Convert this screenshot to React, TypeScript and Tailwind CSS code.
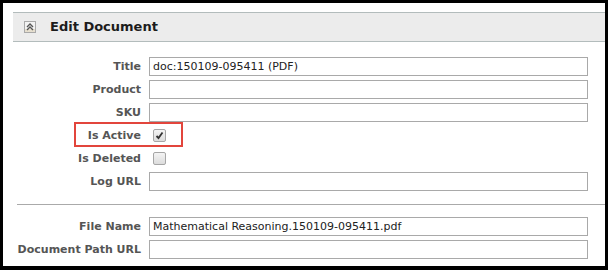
import React from "react";

const font = "font-['DejaVu_Sans','Verdana','Liberation_Sans',sans-serif]";

const CollapseIcon = () => (
     <svg width="12" height="12" viewBox="0 0 12 12" className="shrink-0">
          <rect x="0.5" y="0.5" width="11" height="11" fill="#f2f2f2" stroke="#a9a9a9" />
          <rect x="1" y="8" width="10" height="3" fill="#e6dfcf" />
          <path d="M3 6 L6 3 L9 6" fill="none" stroke="#555" strokeWidth="1.4" />
          <path d="M3 9 L6 6 L9 9" fill="none" stroke="#555" strokeWidth="1.4" />
     </svg>
);

const Checkbox = ({ checked }: { checked?: boolean }) => (
     <span className="flex h-[13px] w-[13px] items-center justify-center rounded-[2px] border border-[#a6a6a6] bg-gradient-to-b from-[#f4f4f4] to-[#dcdcdc]">
          {checked && (
               <svg width="9" height="9" viewBox="0 0 9 9">
                    <path d="M1.5 5 L3.5 7 L7.5 1.5" fill="none" stroke="#333" strokeWidth="1.8" />
               </svg>
          )}
     </span>
);

const Label = ({ children }: { children: React.ReactNode }) => (
     <div className="w-[128px] shrink-0 text-right text-[11px] font-bold leading-[19px] text-[#555]">
          {children}
     </div>
);

const TextRow = ({ label, value }: { label: string; value?: string }) => (
     <div className="flex items-center gap-[8px]">
          <Label>{label}</Label>
          <input
               readOnly
               defaultValue={value ?? ""}
               className={`h-[19px] w-[439px] border border-[#a9a9a9] bg-white px-[3px] text-[11px] text-[#222] outline-none ${font}`}
          />
     </div>
);

const CheckRow = ({ label, checked, highlight }: { label: string; checked?: boolean; highlight?: boolean }) => (
     <div className="relative flex h-[19px] items-center gap-[12px]">
          <Label>{label}</Label>
          <Checkbox checked={checked} />
          {highlight && (
               <div className="absolute left-[61px] top-[-4px] h-[25px] w-[109px] border-2 border-[#e2453c]" />
          )}
     </div>
);

export default function App() {
     return (
          <div className={`min-h-[270px] bg-black pb-[4px] pl-[3px] pr-[3px] pt-[3px] ${font}`}>
               <div className="h-[263px] bg-white pl-[10px] pt-[9px]">
                    <div className="flex h-[30px] items-center border-y border-[#b3bcbc] bg-[#ececec] pl-[11px]">
                         <CollapseIcon />
                         <span className="ml-[14px] text-[13px] font-bold text-[#1c1c1c]">Edit Document</span>
                    </div>

                    <div className="mt-[15px] flex flex-col gap-[4px]">
                         <TextRow label="Title" value="doc:150109-095411 (PDF)" />
                         <TextRow label="Product" />
                         <TextRow label="SKU" />
                         <CheckRow label="Is Active" checked highlight />
                         <CheckRow label="Is Deleted" />
                         <TextRow label="Log URL" />
                    </div>

                    <div className="ml-[4px] mt-[13px] h-px bg-[#aaaaaa]"></div>

                    <div className="mt-[12px] flex flex-col gap-[4px]">
                         <TextRow label="File Name" value="Mathematical Reasoning.150109-095411.pdf" />
                         <TextRow label="Document Path URL" />
                    </div>
               </div>
          </div>
     );
}
